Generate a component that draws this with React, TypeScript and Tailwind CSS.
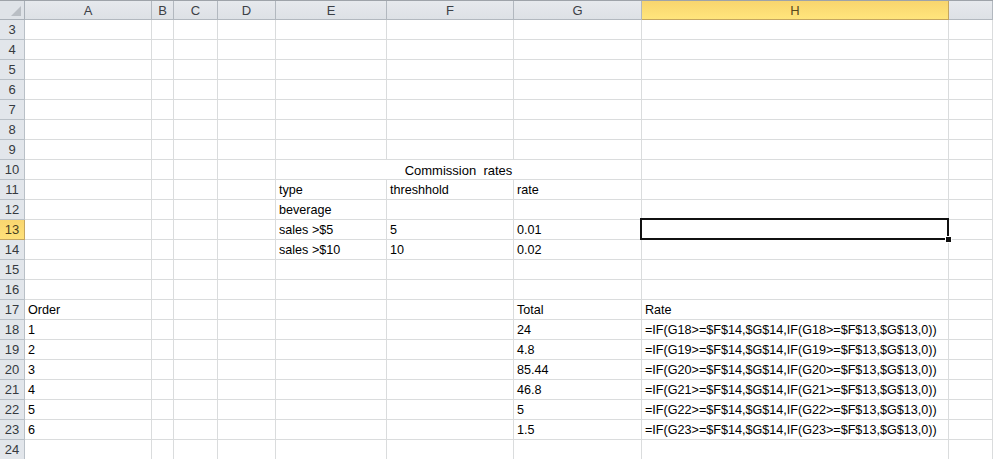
import React from 'react';

const COLS = ['A', 'B', 'C', 'D', 'E', 'F', 'G', 'H', 'I'];
const WIDTHS = ['w-[127px]', 'w-[22px]', 'w-[44px]', 'w-[58px]', 'w-[111px]', 'w-[127px]', 'w-[128px]', 'w-[307px]', 'flex-1'];

type RowData = { [col: string]: string };

const totals = ['24', '4.8', '85.44', '46.8', '5', '1.5'];

const DATA: Record<number, RowData> = {
  11: { E: 'type', F: 'threshhold', G: 'rate' },
  12: { E: 'beverage' },
  13: { E: 'sales >$5', F: '5', G: '0.01' },
  14: { E: 'sales >$10', F: '10', G: '0.02' },
  17: { A: 'Order', G: 'Total', H: 'Rate' },
};

totals.forEach((t, i) => {
  const r = 18 + i;
  DATA[r] = {
    A: String(i + 1),
    G: t,
    H: `=IF(G${r}>=$F$14,$G$14,IF(G${r}>=$F$13,$G$13,0))`,
  };
});

const ROWS = Array.from({ length: 22 }, (_, i) => i + 3);

function ColumnHeader() {
  return (
    <div className="flex h-[20px] border-t border-[#9ea3a9]">
      <div className="relative w-[25px] shrink-0 border-r border-b border-[#a9b0b8] bg-[#dfe3e8]">
        <svg className="absolute right-[3px] bottom-[3px]" width="10" height="10" viewBox="0 0 10 10">
          <path d="M10 0 L10 10 L0 10 Z" fill="#b9bec4" />
        </svg>
      </div>
      {COLS.map((c, i) => {
        const sel = c === 'H';
        return (
          <div
            key={c}
            className={`${WIDTHS[i]} shrink-0 flex items-center justify-center border-b border-r text-[13px] leading-none ${
              sel
                ? 'bg-gradient-to-b from-[#f8d56e] to-[#ffe57c] border-[#c4a560] text-[#5a4a20]'
                : 'bg-gradient-to-b from-[#e6e9ed] to-[#dde1e6] border-[#b2b8bf] text-[#3c4046]'
            }`}
          >
            {c === 'I' ? '' : c}
          </div>
        );
      })}
    </div>
  );
}

function Row({ n }: { n: number }) {
  const data = DATA[n] || {};
  const selRow = n === 13;
  return (
    <div className="flex h-[20px]">
      <div
        className={`w-[25px] shrink-0 flex items-center justify-center border-r border-b text-[13px] leading-none ${
          selRow
            ? 'bg-gradient-to-b from-[#f9d66f] to-[#ffe17a] border-[#c4a560] text-[#4a3f20]'
            : 'bg-[#e2e6eb] border-[#b9c0c7] text-[#363a40]'
        }`}
      >
        {n}
      </div>
      {n === 10 ? (
        <>
          {COLS.slice(0, 4).map((c, i) => (
            <div key={c} className={`${WIDTHS[i]} shrink-0 border-r border-b border-[#dadcdd]`} />
          ))}
          <div className="w-[366px] shrink-0 flex items-end justify-center border-r border-b border-[#dadcdd] text-[13px] leading-[17px] text-black">
            Commission&nbsp;&nbsp;rates
          </div>
          {COLS.slice(7).map((c, i) => (
            <div key={c} className={`${WIDTHS[i + 7]} shrink-0 border-r border-b border-[#dadcdd]`} />
          ))}
        </>
      ) : (
        COLS.map((c, i) => {
          const selCell = selRow && c === 'H';
          return (
            <div
              key={c}
              className={`${WIDTHS[i]} relative shrink-0 flex items-end pl-[3px] border-r border-b border-[#dadcdd] text-[12.6px] leading-[17px] text-black whitespace-nowrap`}
            >
              {data[c] ?? ''}
              {selCell && (
                <div className="absolute z-10 left-[-2px] top-[-2px] right-[-1px] bottom-[-1px] border-2 border-[#111]">
                  <div className="absolute right-[-5px] bottom-[-5px] w-[7px] h-[7px] bg-[#111] border border-white" />
                </div>
              )}
            </div>
          );
        })
      )}
    </div>
  );
}

export default function App() {
  return (
    <div
      className="w-[993px] h-[459px] overflow-hidden bg-white select-none"
      style={{ fontFamily: '"Liberation Sans", Arial, sans-serif' }}
    >
      <ColumnHeader />
      {ROWS.map((n) => (
        <Row key={n} n={n} />
      ))}
    </div>
  );
}
